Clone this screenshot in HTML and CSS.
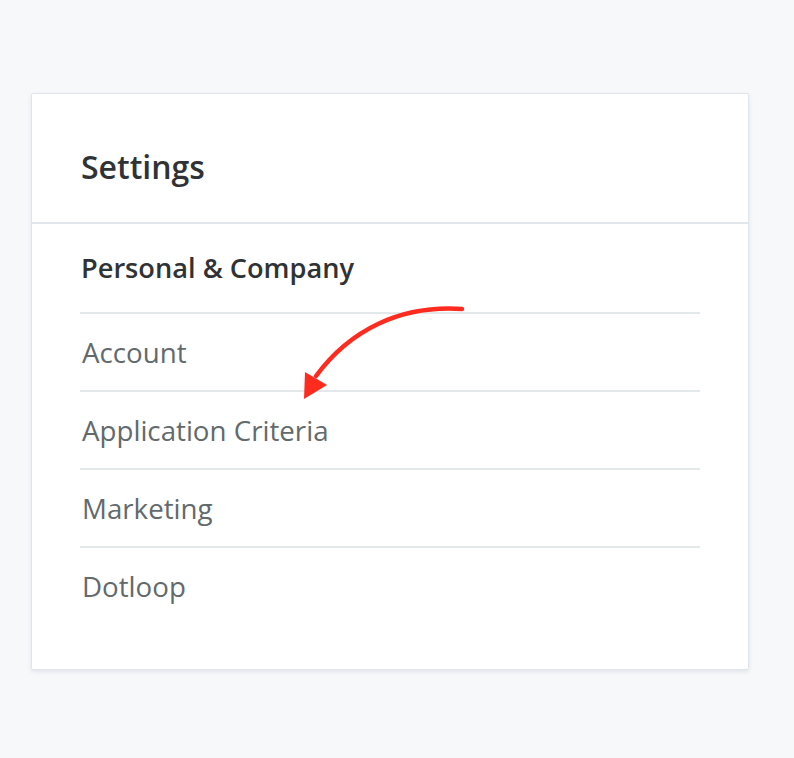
FILE: index.html
```html
<!DOCTYPE html>
<html lang="en">
<head>
<meta charset="utf-8">
<title>Settings</title>
<link rel="stylesheet" href="styles.css">
</head>
<body>
<div class="page">
  <section class="card">
    <header class="card-header">
      <h1 class="card-title">Settings</h1>
    </header>
    <div class="card-body">
      <h2 class="section-title">Personal &amp; Company</h2>
      <ul class="menu">
        <li class="menu-item">Account</li>
        <li class="menu-item">Application Criteria</li>
        <li class="menu-item">Marketing</li>
        <li class="menu-item">Dotloop</li>
      </ul>
    </div>
  </section>
  <svg class="annotation" width="794" height="758" viewBox="0 0 794 758" aria-hidden="true">
    <path d="M462 309 C 400 305 350 330 316 376" fill="none" stroke="#ff2b1f" stroke-width="4.5" stroke-linecap="round"/>
    <polygon points="304,399 305,372 327,385" fill="#ff2b1f"/>
  </svg>
</div>
</body>
</html>
```

FILE: styles.css
```css
html, body {
  margin: 0;
  padding: 0;
}
body {
  background: #f7f8fa;
  font-family: "Open Sans", "Noto Sans", sans-serif;
}
.page {
  position: relative;
  width: 794px;
  height: 758px;
  padding: 93px 0 0 31px;
  box-sizing: border-box;
}
.card {
  width: 718px;
  box-sizing: border-box;
  background: #ffffff;
  border: 1px solid #dfe5e8;
  border-radius: 2px;
  box-shadow: 0 2px 4px rgba(40, 60, 80, 0.10);
}
.card-header {
  height: 110px;
  padding: 18px 49px 0 49px;
  border-bottom: 2px solid #e1e7ea;
  display: flex;
  align-items: center;
}
.card-title {
  margin: 0;
  font-size: 32px;
  font-weight: 600;
  color: #2f3335;
  line-height: 1;
}
.card-body {
  padding: 0 48px 45px 48px;
}
.section-title {
  margin: 0;
  height: 86px;
  padding-bottom: 2px;
  display: flex;
  align-items: center;
  font-size: 27.2px;
  font-weight: 600;
  color: #2f3335;
  padding-left: 1px;
}
.menu {
  list-style: none;
  margin: 0;
  padding: 0;
}
.menu-item {
  height: 76px;
  border-top: 2px solid #e3e8eb;
  display: flex;
  align-items: center;
  font-size: 27.7px;
  font-weight: 400;
  color: #626a6c;
  padding-left: 2px;
}
.annotation {
  position: absolute;
  left: 0;
  top: 0;
  pointer-events: none;
}
```
